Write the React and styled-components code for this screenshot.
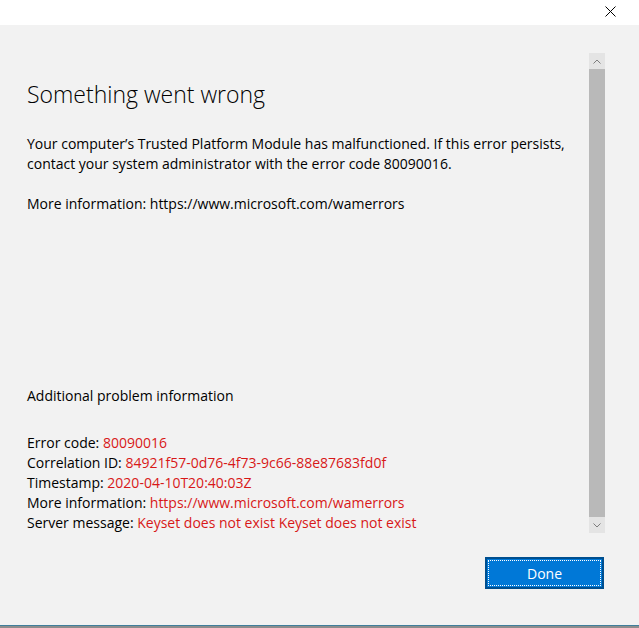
import styled, { createGlobalStyle } from 'styled-components'

const GlobalStyle = createGlobalStyle`
  html, body {
    margin: 0;
    padding: 0;
    background: #f2f2f2;
  }
  * {
    box-sizing: border-box;
  }
`

const Window = styled.div`
  width: 639px;
  height: 628px;
  display: flex;
  flex-direction: column;
  background: #f2f2f2;
  font-family: 'Open Sans', 'Noto Sans', sans-serif;
  color: #000;
  overflow: hidden;
`

const TitleBar = styled.div`
  height: 25px;
  flex: none;
  background: #fff;
  display: flex;
  justify-content: flex-end;
  align-items: flex-start;
`

const CloseButton = styled.div`
  width: 46px;
  height: 22px;
  display: flex;
  align-items: center;
  justify-content: center;
  margin-right: 6px;
`

const Body = styled.div`
  display: flex;
  height: 480px;
  margin-top: 28px;
  padding-right: 34px;
  flex: none;
`

const Main = styled.div`
  flex: 1;
  display: flex;
  flex-direction: column;
  padding-left: 27px;
`

const Heading = styled.h1`
  margin: 25px 0 0;
  font-size: 23px;
  font-weight: 300;
  line-height: 32px;
`

const Paragraph = styled.p`
  margin: ${(p) => p.$top || 0}px 0 0;
  font-size: 14px;
  line-height: 20px;
`

const Spacer = styled.div`
  flex: 1;
`

const InfoList = styled.div`
  margin-top: 27px;
  display: flex;
  flex-direction: column;
`

const InfoRow = styled.div`
  font-size: 14px;
  line-height: 20px;
  white-space: nowrap;
`

const Value = styled.span`
  color: #d81818;
`

const Scrollbar = styled.div`
  width: 16px;
  display: flex;
  flex-direction: column;
  background: #f0f0f0;
`

const ArrowButton = styled.div`
  height: 16px;
  flex: none;
  background: #e4e4e4;
  display: flex;
  align-items: center;
  justify-content: center;
`

const Thumb = styled.div`
  flex: 1;
  background: #b9b9b9;
`

const Footer = styled.div`
  height: 92px;
  flex: none;
  display: flex;
  justify-content: flex-end;
  align-items: flex-start;
  padding: 24px 35px 0 0;
`

const PrimaryButton = styled.button`
  width: 119px;
  height: 32px;
  border: 2px solid #004f8f;
  background: #0078d7;
  padding: 1px;
  font-family: inherit;
  font-size: 14px;
  color: #fff;
  cursor: pointer;
`

const FocusRect = styled.span`
  display: flex;
  width: 100%;
  height: 100%;
  align-items: center;
  justify-content: center;
  border: 1px dotted #fff;
`

const Taskbar = styled.div`
  flex: 1;
  border-top: 1px solid #3f7f9c;
  background: #8d8d8d;
`

const Chevron = ({ up }) => (
  <svg width="8" height="5" viewBox="0 0 8 5">
    <path
      d={up ? 'M0.5 4.5 L4 1 L7.5 4.5' : 'M0.5 0.5 L4 4 L7.5 0.5'}
      fill="none"
      stroke="#7d7d7d"
      strokeWidth="1"
    />
  </svg>
)

const details = [
  ['Error code: ', '80090016'],
  ['Correlation ID: ', '84921f57-0d76-4f73-9c66-88e87683fd0f'],
  ['Timestamp: ', '2020-04-10T20:40:03Z'],
  ['More information: ', 'https://www.microsoft.com/wamerrors'],
  ['Server message: ', 'Keyset does not exist Keyset does not exist']
]

export default function App() {
  return (
    <>
      <GlobalStyle />
      <Window>
        <TitleBar>
          <CloseButton>
            <svg width="11" height="11" viewBox="0 0 11 11">
              <path d="M0.5 0.5 L10.5 10.5 M10.5 0.5 L0.5 10.5" stroke="#000" strokeWidth="1" />
            </svg>
          </CloseButton>
        </TitleBar>
        <Body>
          <Main>
            <Heading>Something went wrong</Heading>
            <Paragraph $top={24}>
              Your computer’s Trusted Platform Module has malfunctioned. If this error persists,
              contact your system administrator with the error code 80090016.
            </Paragraph>
            <Paragraph $top={20}>More information: https://www.microsoft.com/wamerrors</Paragraph>
            <Spacer />
            <Paragraph>Additional problem information</Paragraph>
            <InfoList>
              {details.map(([label, value]) => (
                <InfoRow key={label}>
                  {label}
                  <Value>{value}</Value>
                </InfoRow>
              ))}
            </InfoList>
          </Main>
          <Scrollbar>
            <ArrowButton>
              <Chevron up />
            </ArrowButton>
            <Thumb />
            <ArrowButton>
              <Chevron />
            </ArrowButton>
          </Scrollbar>
        </Body>
        <Footer>
          <PrimaryButton>
            <FocusRect>Done</FocusRect>
          </PrimaryButton>
        </Footer>
        <Taskbar />
      </Window>
    </>
  )
}
